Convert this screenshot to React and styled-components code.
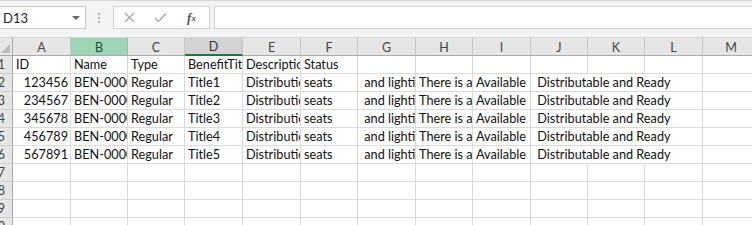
import styled, { createGlobalStyle, css } from "styled-components";

const GlobalStyle = createGlobalStyle`
    html, body {
        margin: 0;
        padding: 0;
        overflow: hidden;
        background: #f3f3f3;
    }
    * { box-sizing: border-box; }
`;

const Window = styled.div`
    width: 752px;
    height: 225px;
    overflow: hidden;
    display: flex;
    flex-direction: column;
    background: #f3f3f3;
    font-family: Lato, "Liberation Sans", sans-serif;
`;

const RibbonEdge = styled.div`
    height: 4px;
    background: #e2e2e2;
    border-bottom: 1px solid #d6d6d6;
`;

const FormulaBar = styled.div`
    display: flex;
    align-items: center;
    height: 23px;
    margin: 5px 0 8px 0;
`;

const NameBox = styled.div`
    width: 87px;
    height: 23px;
    margin-left: -1px;
    background: #fff;
    border: 1px solid #c8c8c8;
    display: flex;
    align-items: center;
    justify-content: space-between;
    padding: 0 5px 0 3px;
    font-size: 13px;
    color: #222;
`;

const DropArrow = styled.span`
    width: 0;
    height: 0;
    border-left: 4px solid transparent;
    border-right: 4px solid transparent;
    border-top: 4px solid #666;
`;

const Grip = styled.div`
    width: 26px;
    display: flex;
    flex-direction: column;
    align-items: center;
    gap: 2px;

    span {
        width: 2px;
        height: 2px;
        background: #b4b4b4;
    }
`;

const FxBox = styled.div`
    width: 97px;
    height: 23px;
    margin-left: 1px;
    background: #fff;
    border: 1px solid #d4d4d4;
    display: flex;
    align-items: center;
`;

const FxSlot = styled.div`
    width: 31px;
    display: flex;
    justify-content: center;
    align-items: center;
    color: #555;
    font-family: "Liberation Serif", serif;
    font-style: italic;
    font-weight: bold;
    font-size: 13px;

    sub {
        font-size: 9px;
        vertical-align: -1px;
    }
`;

const FormulaInput = styled.div`
    flex: 1;
    height: 23px;
    margin-left: 4px;
    margin-right: -2px;
    background: #fff;
    border: 1px solid #d4d4d4;
`;

const widths = [13, 58, 57, 57, 58, 58, 57, 58, 57, 58, 57, 57, 58, 57];

const Sheet = styled.div`
    display: grid;
    grid-template-columns: ${widths.map((w) => w + "px").join(" ")};
    grid-template-rows: 19px;
    grid-auto-rows: 18px;
    background: #fff;
`;

const Corner = styled.div`
    background: #e6e6e6;
    border-top: 1px solid #d6d6d6;
    border-right: 1px solid #a6a6a6;
    border-bottom: 1px solid #ababab;
    position: relative;
    overflow: hidden;

    &::after {
        content: "";
        position: absolute;
        right: 2px;
        bottom: 2px;
        width: 0;
        height: 0;
        border-left: 9px solid transparent;
        border-bottom: 9px solid #b9b9b9;
    }
`;

const ColHeader = styled.div`
    background: #e6e6e6;
    border-top: 1px solid #d6d6d6;
    border-right: 1px solid #c6c6c6;
    border-bottom: 1px solid #ababab;
    display: flex;
    align-items: center;
    justify-content: center;
    font-size: 12.5px;
    color: #444;
    padding-top: 1px;

    ${({ $state }) => $state === "selected" && css`
        background: #9fd5b7;
        color: #1e4e34;
        border-right-color: #8ec4a5;
    `}
    ${({ $state }) => $state === "active" && css`
        background: #d3d3d3;
        border-bottom: 2px solid #217346;
        color: #333;
    `}
`;

const RowHeader = styled.div`
    background: #e6e6e6;
    border-right: 1px solid #a6a6a6;
    border-bottom: 1px solid #cfcfcf;
    overflow: hidden;
    display: flex;
    align-items: center;
    justify-content: flex-end;
    padding-right: 7px;
    font-size: 12.5px;
    color: #444;
    white-space: nowrap;
`;

const Cell = styled.div`
    grid-column: span ${({ $span }) => $span || 1};
    border-right: 1px solid #dadada;
    border-bottom: 1px solid #dadada;
    overflow: hidden;
    white-space: pre;
    display: flex;
    align-items: flex-end;
    justify-content: ${({ $align }) => ($align === "right" ? "flex-end" : "flex-start")};
    padding: 0 2px 1px 3px;
    font-size: 12.7px;
    line-height: 16px;
    color: #111;
`;

const columns = ["A", "B", "C", "D", "E", "F", "G", "H", "I", "J", "K", "L", "M"];

const records = [
    ["123456", "BEN-0000001", "Regular", "Title1"],
    ["234567", "BEN-0000002", "Regular", "Title2"],
    ["345678", "BEN-0000003", "Regular", "Title3"],
    ["456789", "BEN-0000004", "Regular", "Title4"],
    ["567891", "BEN-0000005", "Regular", "Title5"],
];

const headRow = ["ID", "Name", "Type", "BenefitTitle", "Description", "Status"];

const emptyCells = (n, key) => Array.from({ length: n }, (_, i) => <Cell key={key + i} />);

export default function App() {
    return (
        <>
            <GlobalStyle />
            <Window>
                <RibbonEdge />
                <FormulaBar>
                    <NameBox>
                        D13
                        <DropArrow />
                    </NameBox>
                    <Grip>
                        <span />
                        <span />
                        <span />
                    </Grip>
                    <FxBox>
                        <FxSlot>
                            <svg width="11" height="11" viewBox="0 0 11 11">
                                <path d="M1 1 L10 10 M10 1 L1 10" stroke="#a8a8a8" strokeWidth="1.4" fill="none" />
                            </svg>
                        </FxSlot>
                        <FxSlot>
                            <svg width="13" height="11" viewBox="0 0 13 11">
                                <path d="M1 6 L4.5 9.5 L12 1.5" stroke="#a8a8a8" strokeWidth="1.4" fill="none" />
                            </svg>
                        </FxSlot>
                        <FxSlot>
                            f<sub>x</sub>
                        </FxSlot>
                    </FxBox>
                    <FormulaInput />
                </FormulaBar>
                <Sheet>
                    <Corner />
                    {columns.map((c) => (
                        <ColHeader key={c} $state={c === "B" ? "selected" : c === "D" ? "active" : undefined}>
                            {c}
                        </ColHeader>
                    ))}

                    <RowHeader>1</RowHeader>
                    {headRow.map((h) => (
                        <Cell key={h}>{h}</Cell>
                    ))}
                    {emptyCells(7, "h")}

                    {records.map((r, i) => [
                        <RowHeader key={"rh" + i}>{i + 2}</RowHeader>,
                        <Cell key={"a" + i} $align="right">{r[0]}</Cell>,
                        <Cell key={"b" + i}>{r[1]}</Cell>,
                        <Cell key={"c" + i}>{r[2]}</Cell>,
                        <Cell key={"d" + i}>{r[3]}</Cell>,
                        <Cell key={"e" + i}>Distribution</Cell>,
                        <Cell key={"f" + i}>seats</Cell>,
                        <Cell key={"g" + i}>{" and lighting"}</Cell>,
                        <Cell key={"h" + i}>There is a</Cell>,
                        <Cell key={"i" + i}>Available</Cell>,
                        <Cell key={"j" + i} $span={3}>{" Distributable and Ready"}</Cell>,
                        <Cell key={"m" + i} />,
                    ])}

                    {[7, 8, 9, 10].map((n) => [
                        <RowHeader key={"rh" + n}>{n}</RowHeader>,
                        ...emptyCells(13, "r" + n + "-"),
                    ])}
                </Sheet>
            </Window>
        </>
    );
}
